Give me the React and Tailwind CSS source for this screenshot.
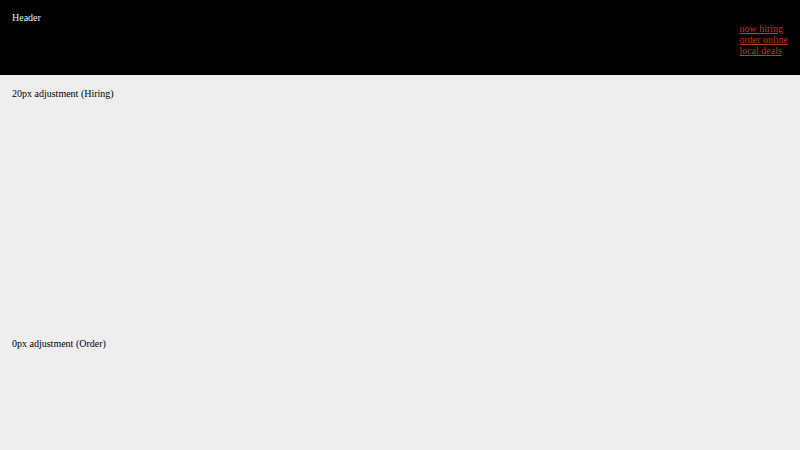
import React from 'react';

const links = ['now hiring', 'order online', 'local deals'];

export default function App() {
  return (
    <div className="min-h-screen bg-[#eeeeee] text-[10px] text-black" style={{ fontFamily: '"Liberation Serif", serif' }}>
      {/* Header */}
      <header className="h-[75px] bg-black px-3 pt-[10px] text-[#eeeeee] flex justify-between items-start">
        <div>Header</div>
        <nav className="mt-[13px] flex flex-col">
          {links.map(l => (
            <a key={l} href="#" className="text-[#c0392b] underline leading-[11px]">{l}</a>
          ))}
        </nav>
      </header>

      <section className="h-[250px] px-3 pt-[11px]">20px adjustment (Hiring)</section>
      <section className="px-3 pt-[11px]">0px adjustment (Order)</section>
    </div>
  );
}
